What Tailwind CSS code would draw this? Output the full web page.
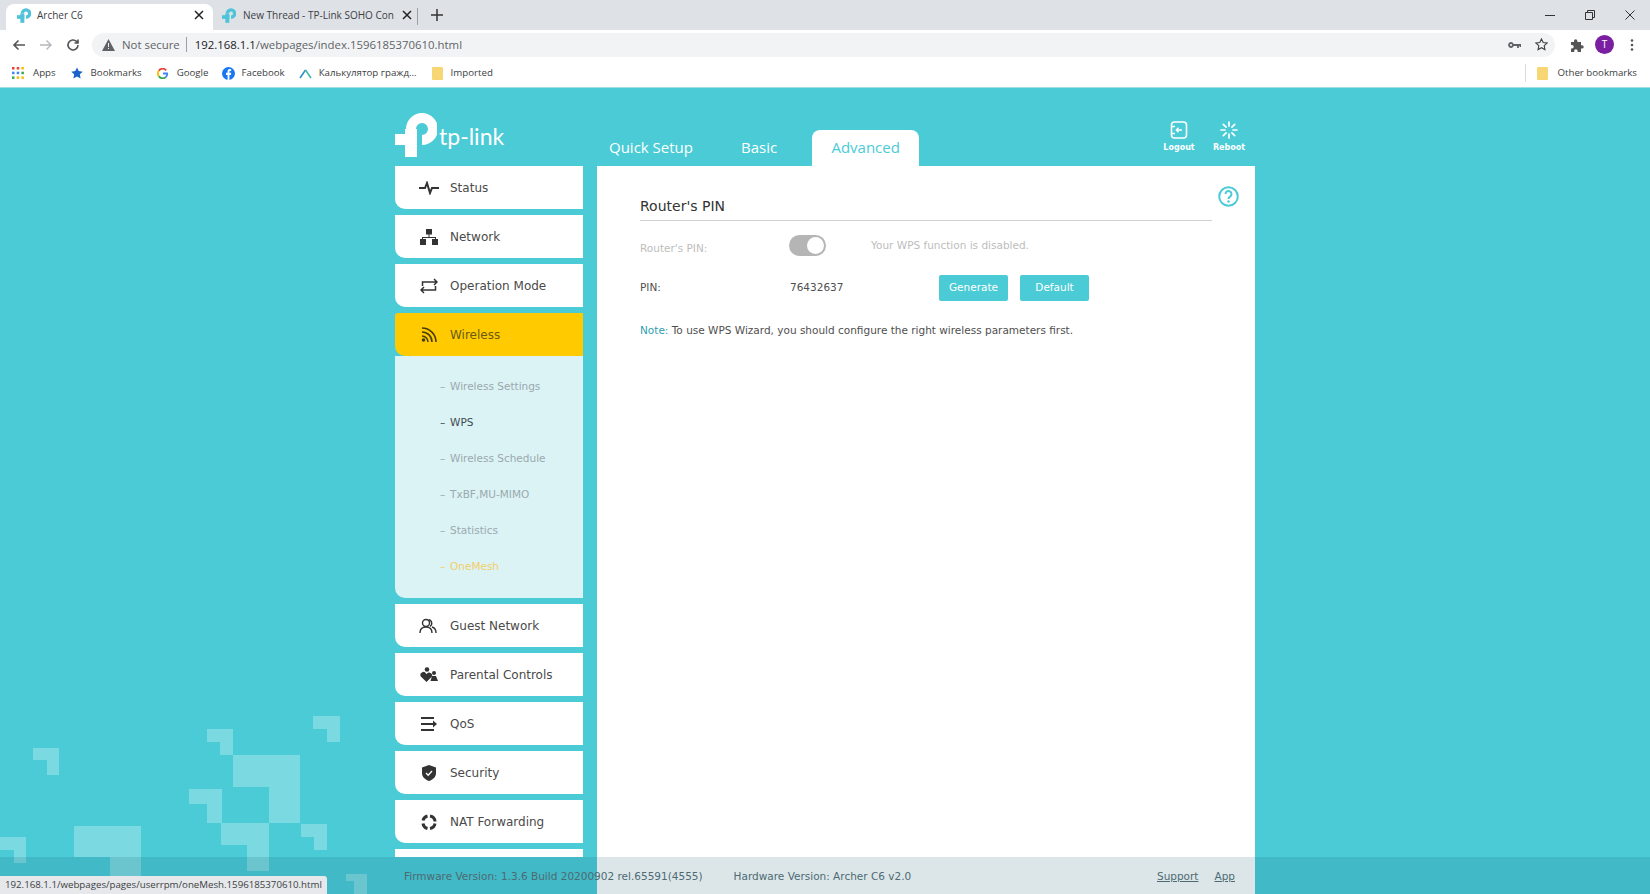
<!DOCTYPE html>
<html lang="en">
<head>
    <meta charset="UTF-8">
    <title>Archer C6</title>
    <script src="https://cdn.jsdelivr.net/npm/@tailwindcss/browser@4"></script>
</head>
<body class="overflow-hidden">
    <svg class="hidden">
        <symbol id="tp" viewBox="0 0 42 44">
            <g fill="none" stroke="currentColor">
                <path d="M16 16A11 11 0 1 1 27 27" stroke-width="10"></path>
                <path d="M0 26.500H22" stroke-width="11"></path>
                <path d="M16 16V44" stroke-width="12"></path>
            </g>
        </symbol>
    </svg>

    <div class="relative w-[1650px] h-[894px] flex flex-col overflow-hidden font-['Open_Sans',sans-serif]">
        <!-- Tab strip -->
        <div class="h-[30px] bg-[#dee1e6] flex items-end pl-[6px] text-[10px] text-[#3c4043] shrink-0">
            <div class="w-[207px] h-[26px] bg-white rounded-t-lg flex items-center pl-[11px] pr-[8px] pb-[4px] gap-[6px]">
                <svg class="w-[14px] h-[15px] text-[#4fc3d9]"><use href="#tp"></use></svg>
                <span class="flex-1">Archer C6</span>
                <svg class="w-3 h-3" viewBox="0 0 12 12" stroke="#222" stroke-width="1.5"><path d="M2 2l8 8M10 2l-8 8"></path></svg>
            </div>
            <div class="w-[204px] h-[26px] flex items-center pl-[9px] pr-[7px] pb-[4px] gap-[7px]">
                <svg class="w-[14px] h-[15px] shrink-0 text-[#4fc3d9]"><use href="#tp"></use></svg>
                <span class="flex-1 whitespace-nowrap">New Thread - TP-Link SOHO Con</span>
                <svg class="w-3 h-3 shrink-0" viewBox="0 0 12 12" stroke="#222" stroke-width="1.5"><path d="M2 2l8 8M10 2l-8 8"></path></svg>
            </div>
            <div class="w-px h-[17px] bg-[#9aa0a6] mb-[5px]"></div>
            <svg class="w-3 h-3 ml-[13px] mb-[9px]" viewBox="0 0 12 12" stroke="#333" stroke-width="1.5"><path d="M6 0v12M0 6h12"></path></svg>
            <div class="ml-auto flex items-center h-full pr-[15px] gap-[30px]">
                <svg class="w-[10px] h-[10px]" viewBox="0 0 10 10" stroke="#333"><path d="M0 5.5h10"></path></svg>
                <svg class="w-[10px] h-[10px]" viewBox="0 0 10 10" fill="none" stroke="#333"><path d="M.5 2.5h7v7h-7zM2.5 2.5v-2h7v7h-2"></path></svg>
                <svg class="w-[10px] h-[10px]" viewBox="0 0 10 10" stroke="#333"><path d="M.5.5l9 9M9.500.5l-9 9"></path></svg>
            </div>
        </div>

        <!-- Address bar -->
        <div class="h-[29px] bg-white flex items-center pl-[12px] pr-[16px] shrink-0">
            <svg class="w-[14px] h-[14px]" viewBox="0 0 14 14" fill="none" stroke="#555" stroke-width="1.6"><path d="M13 7H2M6.500 2.500L2 7l4.500 4.500"></path></svg>
            <svg class="w-[14px] h-[14px] ml-[13px]" viewBox="0 0 14 14" fill="none" stroke="#b4b7bb" stroke-width="1.4"><path d="M1 7h11M7.500 2.500L12 7l-4.500 4.500"></path></svg>
            <svg class="w-[14px] h-[14px] ml-[13px]" viewBox="0 0 14 14" fill="none" stroke="#555" stroke-width="1.6"><path d="M12 7a5 5 0 1 1-1.500-3.600L12 5M12 1.500V5H8.500"></path></svg>
            <div class="ml-[12px] flex-1 h-[24px] bg-[#f1f3f4] rounded-full flex items-center pl-[10px] pr-[7px] text-[11.4px]">
                <svg class="w-[13px] h-[12px]" viewBox="0 0 13 12" fill="#5f6368"><path d="M6.500 0L13 12H0z"></path><path d="M6 4h1v4H6zM6 9h1v1H6z" fill="#f1f3f4"></path></svg>
                <span class="ml-[7px] text-[#5f6368]">Not secure</span>
                <span class="w-px h-[15px] bg-[#9aa0a6] ml-[6px]"></span>
                <span class="ml-[8px] text-[#5f6368] whitespace-nowrap"><span class="text-[#202124]">192.168.1.1</span>/webpages/index.1596185370610.html</span>
                <svg class="ml-auto w-[13px] h-[8px]" viewBox="0 0 13 8" fill="none" stroke="#5f6368" stroke-width="1.8"><circle cx="3" cy="4" r="2"></circle><path d="M5 4h8M10 4v3M12.500 4v2"></path></svg>
                <svg class="ml-[14px] w-[13px] h-[13px]" viewBox="0 0 14 14" fill="none" stroke="#444" stroke-width="1.200"><path d="M7 1l1.800 3.900 4.200.5-3.100 2.900.8 4.200L7 10.400l-3.700 2.100.8-4.200L1 5.400l4.200-.5z"></path></svg>
            </div>
            <svg class="ml-[15px] w-[14px] h-[14px]" viewBox="0 0 14 14" fill="#555"><path d="M1 4h3V3a1.700 1.700 0 0 1 3.400 0v1H11v3.200h1a1.700 1.700 0 0 1 0 3.400h-1V14H7.600v-1a1.700 1.700 0 0 0-3.400 0v1H1v-3.500h1a1.700 1.700 0 0 0 0-3.400H1z"></path></svg>
            <div class="ml-[11px] w-[19px] h-[19px] rounded-full bg-[#7b1fa2] text-white text-[10px] flex items-center justify-center">T</div>
            <svg class="ml-[16px] w-[4px] h-[12px]" viewBox="0 0 4 12" fill="#555"><circle cx="2" cy="1.500" r="1.300"></circle><circle cx="2" cy="6" r="1.300"></circle><circle cx="2" cy="10.500" r="1.300"></circle></svg>
        </div>

        <!-- Bookmarks bar -->
        <div class="h-[29px] bg-white flex items-center pl-[12px] pr-[12px] text-[9.7px] text-[#3c4043] shrink-0 border-b border-[#9fdfe5]">
            <svg class="w-[12px] h-[12px]" viewBox="0 0 12 12">
                <g fill="#ea4335"><rect width="2.500" height="2.500"></rect><rect x="4.700" width="2.500" height="2.500"></rect></g>
                <rect x="9.400" width="2.500" height="2.500" fill="#fbbc04"></rect>
                <g fill="#4285f4"><rect y="4.700" width="2.500" height="2.500"></rect><rect x="4.700" y="4.700" width="2.500" height="2.500"></rect></g>
                <rect x="9.400" y="4.700" width="2.500" height="2.500" fill="#34a853"></rect>
                <g fill="#34a853"><rect y="9.400" width="2.500" height="2.500"></rect></g>
                <g fill="#fbbc04"><rect x="4.700" y="9.400" width="2.500" height="2.500"></rect><rect x="9.400" y="9.400" width="2.500" height="2.500"></rect></g>
            </svg>
            <span class="ml-[9px]">Apps</span>
            <svg class="ml-[15px] w-[12px] h-[12px]" viewBox="0 0 14 14" fill="#1a62c9"><path d="M7 .5l2 4.300 4.700.6-3.400 3.200.9 4.700L7 11l-4.200 2.300.9-4.700L.3 5.400 5 4.800z"></path></svg>
            <span class="ml-[8px]">Bookmarks</span>
            <svg class="ml-[15px] w-[11px] h-[11px]" viewBox="0 0 12 12" fill="none" stroke-width="2"><path d="M10 2.500A5 5 0 0 0 2 3" stroke="#ea4335"></path><path d="M2 3a5 5 0 0 0 0 6" stroke="#fbbc04"></path><path d="M2 9a5 5 0 0 0 7.500 1" stroke="#34a853"></path><path d="M9.500 10A5 5 0 0 0 11 6H6.500" stroke="#4285f4"></path></svg>
            <span class="ml-[9px]">Google</span>
            <svg class="ml-[13px] w-[13px] h-[13px]" viewBox="0 0 14 14"><circle cx="7" cy="7" r="7" fill="#1877f2"></circle><path d="M6 14V8.500H4.300V6.300H6V4.700C6 3 7 2.200 8.500 2.200l1.400.1v1.900H9c-.8 0-1 .4-1 1v1.100h1.900l-.3 2.200H8V14z" fill="#fff"></path></svg>
            <span class="ml-[7px]">Facebook</span>
            <svg class="ml-[14px] w-[13px] h-[11px]" viewBox="0 0 13 11" fill="none" stroke-width="1.600"><path d="M1 10L6.500 2" stroke="#2f8fc9"></path><path d="M6.500 2L12 10" stroke="#45b6a8"></path></svg>
            <span class="ml-[7px] whitespace-nowrap">Калькулятор гражд...</span>
            <svg class="ml-[15px] w-[11px] h-[13px]" viewBox="0 0 11 13" fill="#f7d774"><rect width="11" height="13" rx="1"></rect></svg>
            <span class="ml-[8px]">Imported</span>
            <span class="ml-auto w-px h-[18px] bg-[#dadce0]"></span>
            <svg class="ml-[11px] w-[11px] h-[13px]" viewBox="0 0 11 13" fill="#f7d774"><rect width="11" height="13" rx="1"></rect></svg>
            <span class="ml-[9px] mr-[1px]">Other bookmarks</span>
        </div>

        <!-- Router page -->
        <div class="flex-1 bg-[#4acbd6] flex justify-center">
            <div class="w-[860px] flex flex-col z-10">
                <div class="h-[78px] flex items-end relative">
                    <div class="absolute left-0 top-[25px] flex items-start text-white">
                        <svg class="w-[42px] h-[44px]"><use href="#tp"></use></svg>
                        <span class="font-['Lato',sans-serif] text-[23px] leading-[26px] mt-[10px] ml-[2px]">tp-link</span>
                    </div>
                    <div class="ml-[214px] flex items-end text-[15px] text-white h-[36px]">
                        <span class="h-full flex items-center pb-[2px]">Quick Setup</span>
                        <span class="h-full flex items-center pb-[2px] ml-[48px]">Basic</span>
                        <span class="h-full w-[107px] ml-[35px] pb-[2px] bg-white text-[#4acbd6] rounded-t-lg flex items-center justify-center">Advanced</span>
                    </div>
                    <div class="ml-auto mr-[11px] mb-[12px] flex gap-[20px] text-white text-[8px] font-bold font-['DejaVu_Sans',sans-serif]">
                        <div class="flex flex-col items-center gap-[3px] w-[30px]">
                            <svg class="w-[18px] h-[18px]" viewBox="0 0 18 18" fill="none" stroke="#fff" stroke-width="1.600"><rect x="1.500" y="1" width="15" height="16" rx="3"></rect><path d="M1 5.500h4M1 12.500h4"></path><path d="M12 9H6.500M8.500 6.800L6.300 9l2.200 2.200" stroke-width="1.400"></path></svg>
                            <span>Logout</span>
                        </div>
                        <div class="flex flex-col items-center gap-[3px] w-[30px]">
                            <svg class="w-[18px] h-[18px]" viewBox="0 0 18 18" fill="none" stroke="#fff" stroke-width="1.700" stroke-linecap="round"><path d="M9 1v4M9 13v4M1 9h4M13 9h4M3.300 3.300l2.800 2.800M11.900 11.900l2.800 2.800M14.700 3.300l-2.800 2.800M6.100 11.900l-2.800 2.800"></path></svg>
                            <span>Reboot</span>
                        </div>
                    </div>
                </div>

                <div class="flex gap-[14px] flex-1 min-h-0 font-['DejaVu_Sans',sans-serif]">
                    <!-- Sidebar -->
                    <div class="w-[188px] h-[691px] overflow-hidden flex flex-col gap-[6px] text-[12px] text-[#4a4a4a]">
                        <div class="h-[43px] shrink-0 bg-white rounded-bl-[10px] flex items-center">
                            <svg class="w-[20px] h-[14px] ml-[24px]" viewBox="0 0 20 14" fill="none" stroke="#333" stroke-width="2"><path d="M0 7h6l2-5 3 10 2-5h7"></path></svg>
                            <span class="ml-[11px]">Status</span>
                        </div>
                        <div class="h-[43px] shrink-0 bg-white rounded-bl-[10px] flex items-center">
                            <svg class="w-[18px] h-[16px] ml-[25px]" viewBox="0 0 18 16" fill="#333"><rect x="6" y="0" width="6" height="5.500"></rect><rect x="0" y="10" width="6" height="6"></rect><rect x="12" y="10" width="6" height="6"></rect><path d="M8.500 5h1v3H16v3h-1V9H3v2H2V8h6.500z"></path></svg>
                            <span class="ml-[12px]">Network</span>
                        </div>
                        <div class="h-[43px] shrink-0 bg-white rounded-bl-[10px] flex items-center">
                            <svg class="w-[18px] h-[16px] ml-[25px]" viewBox="0 0 18 16" fill="none" stroke="#333" stroke-width="1.500"><path d="M17 4H2.500v4M14 1l3 3-3 3M1 12h14.500V8M4 9l-3 3 3 3"></path></svg>
                            <span class="ml-[12px]">Operation Mode</span>
                        </div>
                        <div class="h-[43px] shrink-0 bg-[#ffcb00] rounded-tl-[3px] rounded-bl-[10px] flex items-center text-[#6b5a10]">
                            <svg class="w-[16px] h-[15px] ml-[26px]" viewBox="0 0 16 15" fill="none" stroke="#4a3d08" stroke-width="1.600"><path d="M1 1a14 14 0 0 1 14 14M1 5a10 10 0 0 1 10 10M1 9a6 6 0 0 1 6 6"></path><circle cx="2.500" cy="13" r="1.800" fill="#4a3d08" stroke="none"></circle></svg>
                            <span class="ml-[13px]">Wireless</span>
                        </div>
                        <!-- Wireless sub menu -->
                        <div class="-mt-[6px] h-[242px] shrink-0 bg-[#dbf3f5] rounded-bl-[10px] pt-[13px] text-[10.5px] text-[#9aa9ae] flex flex-col">
                            <div class="h-[36px] flex items-center pl-[45px]"><span class="w-[10px]">–</span><span>Wireless Settings</span></div>
                            <div class="h-[36px] flex items-center pl-[45px] text-[#3d4a50]"><span class="w-[10px]">–</span><span>WPS</span></div>
                            <div class="h-[36px] flex items-center pl-[45px]"><span class="w-[10px]">–</span><span>Wireless Schedule</span></div>
                            <div class="h-[36px] flex items-center pl-[45px]"><span class="w-[10px]">–</span><span>TxBF,MU-MIMO</span></div>
                            <div class="h-[36px] flex items-center pl-[45px]"><span class="w-[10px]">–</span><span>Statistics</span></div>
                            <div class="h-[36px] flex items-center pl-[45px] text-[#f3cf6a]"><span class="w-[10px]">–</span><span>OneMesh</span></div>
                        </div>
                        <div class="h-[43px] shrink-0 bg-white rounded-bl-[10px] flex items-center">
                            <svg class="w-[18px] h-[16px] ml-[24px]" viewBox="0 0 18 16" fill="none" stroke="#333" stroke-width="1.400"><circle cx="7" cy="5" r="3.500"></circle><path d="M9.500 1.800a3.500 3.500 0 0 1 1.500 6.500M1 15c0-4 2.500-6 6-6s6 2 6 6M13 9c2.500.6 4 2.500 4 6"></path></svg>
                            <span class="ml-[13px]">Guest Network</span>
                        </div>
                        <div class="h-[43px] shrink-0 bg-white rounded-bl-[10px] flex items-center">
                            <svg class="w-[18px] h-[15px] ml-[25px]" viewBox="0 0 18 15" fill="#333"><circle cx="7" cy="2.500" r="2.300"></circle><path d="M6.500 15L.8 9.500A3 3 0 0 1 6 6.500l.5.800.5-.8a3 3 0 0 1 5 3z"></path><circle cx="14" cy="6" r="2"></circle><path d="M10.500 14l1.500-5h4l2 5z"></path></svg>
                            <span class="ml-[12px]">Parental Controls</span>
                        </div>
                        <div class="h-[43px] shrink-0 bg-white rounded-bl-[10px] flex items-center">
                            <svg class="w-[16px] h-[14px] ml-[26px]" viewBox="0 0 16 14" fill="#333"><rect y="0" width="13" height="2"></rect><rect y="6" width="13" height="2"></rect><rect y="12" width="13" height="2"></rect><path d="M12 3.500L16 7l-4 3.500z"></path></svg>
                            <span class="ml-[13px]">QoS</span>
                        </div>
                        <div class="h-[43px] shrink-0 bg-white rounded-bl-[10px] flex items-center">
                            <svg class="w-[14px] h-[16px] ml-[27px]" viewBox="0 0 14 16"><path d="M7 0l7 2.500V8c0 4-3 6.500-7 8-4-1.500-7-4-7-8V2.500z" fill="#333"></path><path d="M4 8l2.200 2.200L10 6" fill="none" stroke="#fff" stroke-width="1.300"></path></svg>
                            <span class="ml-[14px]">Security</span>
                        </div>
                        <div class="h-[43px] shrink-0 bg-white rounded-bl-[10px] flex items-center">
                            <svg class="w-[16px] h-[16px] ml-[26px]" viewBox="0 0 16 16" fill="none" stroke="#333" stroke-width="3"><path d="M9 2a6 6 0 0 1 5 5.500M14 9.500a6 6 0 0 1-5 5M6.500 14.500a6 6 0 0 1-4.500-5M2 6.500a6 6 0 0 1 4.500-4.500"></path></svg>
                            <span class="ml-[13px]">NAT Forwarding</span>
                        </div>
                        <div class="h-[43px] shrink-0 bg-white rounded-bl-[10px]"></div>
                    </div>

                    <!-- Main panel -->
                    <div class="relative flex-1 bg-white pl-[43px] pr-[43px] text-[10.5px] text-[#4f4f4f]">
                        <div class="h-[55px] pt-[30px] border-b border-[#d0d0d0] text-[14px] leading-[20px] text-[#333]">Router's PIN</div>
                        <svg class="absolute right-[16px] top-[20px] w-[21px] h-[21px]" viewBox="0 0 21 21" fill="none" stroke="#4acbd6" stroke-width="2"><circle cx="10.500" cy="10.500" r="9.300"></circle><path d="M7.500 8a3 3 0 1 1 4.800 2.400c-1.200.8-1.800 1.300-1.800 2.600"></path><circle cx="10.500" cy="15.500" r="1.200" fill="#4acbd6" stroke="none"></circle></svg>
                        <div class="flex items-center h-[21px] mt-[14px] text-[#bdbdbd]">
                            <span class="w-[149px] pt-[7px]">Router's PIN:</span>
                            <div class="w-[37px] h-[21px] rounded-full bg-[#b5b5b5] flex items-center justify-end pr-[2px]"><div class="w-[17px] h-[17px] rounded-full bg-white"></div></div>
                            <span class="ml-[45px] mt-[1px]">Your WPS function is disabled.</span>
                        </div>
                        <div class="flex items-center h-[26px] mt-[19px]">
                            <span class="w-[150px]">PIN:</span>
                            <span class="w-[149px]">76432637</span>
                            <div class="w-[69px] h-[26px] rounded-[2px] bg-[#4acbd6] text-white text-[10.5px] flex items-center justify-center">Generate</div>
                            <div class="w-[69px] h-[26px] ml-[12px] rounded-[2px] bg-[#4acbd6] text-white text-[10.5px] flex items-center justify-center">Default</div>
                        </div>
                        <div class="mt-[22px]"><span class="text-[#2f9fb0]">Note:</span> To use WPS Wizard, you should configure the right wireless parameters first.</div>
                    </div>
                </div>
            </div>
        </div>

        <!-- Background squares -->
        <svg class="absolute left-0 top-0 w-[400px] h-[894px]" viewBox="0 0 400 894" fill="#ffffff" fill-opacity="0.27">
            <path d="M33 748h26v27H47v-15H33z"></path>
            <path d="M207 729h26v26H220v-13h-13z"></path>
            <path d="M233 755h67v68H269V787H233z"></path>
            <path d="M313 716h27v26H327v-13h-14z"></path>
            <path d="M189 789h33v34H207V804H189z"></path>
            <path d="M221 823h48v48H247V845H221z"></path>
            <path d="M301 824h26v26H314V837h-13z"></path>
            <path d="M74 826h67v68H110V857H74z"></path>
            <path d="M0 837h26v26H14V850H0z"></path>
            <path d="M346 874h21v20H354V881h-8z"></path>
        </svg>

        <!-- Footer bar -->
        <div class="absolute left-0 right-0 bottom-0 h-[37px] pt-[3px] bg-[#165a6c]/15 flex justify-center z-20 font-['DejaVu_Sans',sans-serif] text-[10.5px] text-[#4d6a72]">
            <div class="w-[860px] flex items-center pl-[9px] pr-[20px]">
                <span>Firmware Version: 1.3.6 Build 20200902 rel.65591(4555)</span>
                <span class="ml-[31px]">Hardware Version: Archer C6 v2.0</span>
                <span class="ml-auto underline">Support</span>
                <span class="ml-[16px] underline">App</span>
            </div>
        </div>

        <!-- Link status bubble -->
        <div class="absolute left-0 bottom-0 w-[327px] h-[18px] bg-[#e6e8eb] rounded-tr-[3px] pl-[5px] text-[9.7px] leading-[18px] text-[#3c4043] z-30 whitespace-nowrap">192.168.1.1/webpages/pages/userrpm/oneMesh.1596185370610.html</div>
    </div>
</body>
</html>
